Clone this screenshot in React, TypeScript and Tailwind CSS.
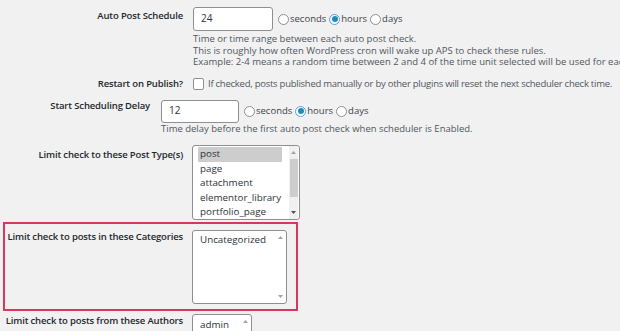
import React from "react";

const font = { fontFamily: '"Open Sans", "Noto Sans", sans-serif' };

function Radio({ label, checked }: { label: string; checked?: boolean }) {
  return (
    <span className="flex items-center">
      <span
        className={
          "flex h-[11px] w-[11px] items-center justify-center rounded-full border bg-white " +
          (checked ? "border-[#5b9dd9]" : "border-[#8c8f94]")
        }
      >
        {checked && <span className="h-[6px] w-[6px] rounded-full bg-[#1e8cbe]" />}
      </span>
      <span className="ml-[1px]">{label}</span>
    </span>
  );
}

function TimeUnits() {
  return (
    <div className="ml-[5px] flex items-center gap-[3px] text-[#3c434a]">
      <Radio label="seconds" />
      <Radio label="hours" checked />
      <Radio label="days" />
    </div>
  );
}

function Label({ children, width }: { children: React.ReactNode; width: number }) {
  return (
    <div
      className="shrink-0 whitespace-nowrap text-right font-semibold tracking-[-0.15px] text-[#23282d]"
      style={{ width }}
    >
      {children}
    </div>
  );
}

function ArrowUp({ dark }: { dark?: boolean }) {
  return (
    <svg width="7" height="5" viewBox="0 0 7 5">
      <path d="M3.5 1 L6 4 L1 4 Z" fill={dark ? "#505050" : "#a3a3a3"} />
    </svg>
  );
}

function ArrowDown({ dark }: { dark?: boolean }) {
  return (
    <svg width="7" height="5" viewBox="0 0 7 5">
      <path d="M1 1 L6 1 L3.5 4 Z" fill={dark ? "#505050" : "#a3a3a3"} />
    </svg>
  );
}

export default function App() {
  return (
    <div
      className="h-[331px] w-[620px] overflow-hidden bg-[#f1f1f1] text-[9.5px] leading-[11.5px] text-[#3c434a]"
      style={font}
    >
      {/* Auto Post Schedule */}
      <div className="flex pt-[7px]">
        <Label width={183}>
          <div className="pt-[3px]">Auto Post Schedule</div>
        </Label>
        <div className="ml-[10px] min-w-0">
          <div className="flex items-center">
            <div className="flex h-[24px] w-[80px] items-center rounded-[3px] border border-[#8c8f94] bg-white pl-[7px] text-[10px] text-[#2c3338]">
              24
            </div>
            <TimeUnits />
          </div>
          <div className="mt-[2px] whitespace-nowrap text-[#50575e]">
            <div>Time or time range between each auto post check.</div>
            <div>This is roughly how often WordPress cron will wake up APS to check these rules.</div>
            <div>
              Example: 2-4 means a random time between 2 and 4 of the time unit selected will be used for each check.
            </div>
          </div>
        </div>
      </div>

      {/* Restart on Publish */}
      <div className="mt-[10px] flex items-center">
        <Label width={183}>Restart on Publish?</Label>
        <div className="ml-[10px] flex items-center whitespace-nowrap text-[#50575e]">
          <span className="h-[12px] w-[11px] rounded-[2px] border border-[#8c8f94] bg-white" />
          <span className="ml-[4px] tracking-[-0.25px]">
            If checked, posts published manually or by other plugins will reset the next scheduler check time.
          </span>
        </div>
      </div>

      {/* Start Scheduling Delay */}
      <div className="mt-[10px] flex">
        <Label width={150}>Start Scheduling Delay</Label>
        <div className="ml-[11px]">
          <div className="flex items-center">
            <div className="flex h-[23px] w-[78px] items-center rounded-[3px] border border-[#8c8f94] bg-white pl-[7px] text-[10px] text-[#2c3338]">
              12
            </div>
            <TimeUnits />
          </div>
          <div className="whitespace-nowrap text-[#50575e]">
            Time delay before the first auto post check when scheduler is Enabled.
          </div>
        </div>
      </div>

      {/* Post types */}
      <div className="mt-[11px] flex">
        <Label width={183}>
          <div className="pt-[4px]">Limit check to these Post Type(s)</div>
        </Label>
        <div className="ml-[9px] flex h-[75px] w-[108px] rounded-[3px] border border-[#8c8f94] bg-white text-[9.8px] leading-[14.5px] text-[#2c3338]">
          <div className="flex-1 overflow-hidden pl-[5px] pt-[1px]">
            <div className="w-[84px] bg-[#cdcdcd] pl-[2px]">post</div>
            <div className="pl-[2px]">page</div>
            <div className="pl-[2px]">attachment</div>
            <div className="pl-[2px]">elementor_library</div>
            <div className="pl-[2px]">portfolio_page</div>
          </div>
          <div className="mr-[1px] flex w-[9px] flex-col items-center bg-[#f0f0f0]">
            <div className="flex h-[13px] items-center">
              <ArrowUp />
            </div>
            <div className="h-[38px] w-[8px] bg-[#cdcdcd]" />
            <div className="flex-1" />
            <div className="flex h-[13px] items-center">
              <ArrowDown dark />
            </div>
          </div>
        </div>
      </div>

      {/* Categories - highlighted */}
      <div className="ml-[3px] mt-[2px] w-[295px] border-2 border-[#d9375b] pb-[5px] pt-[6px]">
        <div className="flex">
          <Label width={178}>
            <div className="pt-[1px]">Limit check to posts in these Categories</div>
          </Label>
          <div className="ml-[9px] flex h-[74px] w-[95px] rounded-[3px] border border-[#8c8f94] bg-white text-[9.8px] leading-[14.5px] text-[#2c3338]">
            <div className="flex-1 pl-[7px] pt-[2px]">Uncategorized</div>
            <div className="mr-[1px] flex w-[9px] flex-col items-center">
              <div className="flex h-[13px] items-center">
                <ArrowUp />
              </div>
              <div className="flex-1" />
              <div className="flex h-[13px] items-center">
                <ArrowDown />
              </div>
            </div>
          </div>
        </div>
      </div>

      {/* Authors */}
      <div className="mt-[3px] flex">
        <Label width={183}>
          <div className="pt-[1px]">Limit check to posts from these Authors</div>
        </Label>
        <div className="ml-[9px] flex h-[30px] w-[60px] rounded-[3px] border border-[#8c8f94] bg-white text-[9.8px] leading-[14.5px] text-[#2c3338]">
          <div className="flex-1 pl-[7px] pt-[3px]">admin</div>
          <div className="mr-[1px] flex w-[9px] flex-col items-center">
            <div className="flex h-[13px] items-center">
              <ArrowUp />
            </div>
          </div>
        </div>
      </div>
    </div>
  );
}
